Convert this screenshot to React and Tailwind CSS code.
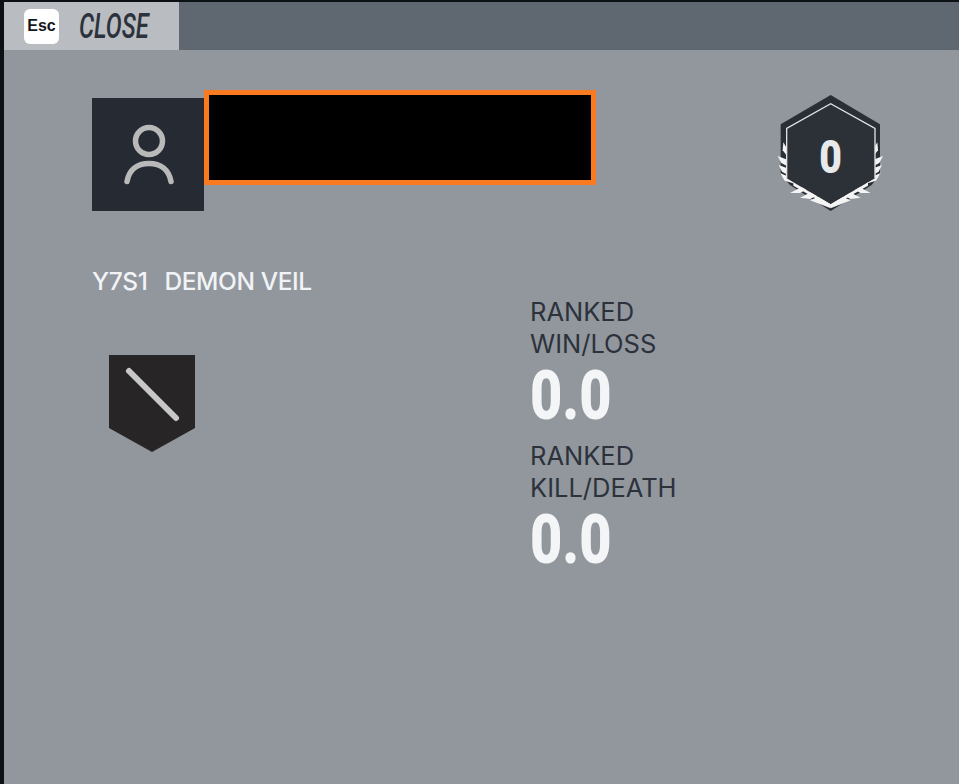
const Stat = ({ first, second, value }) => (
  <div className="flex flex-col">
    <div className="text-[25.5px] leading-[32px] text-[#2c323b]">{first}</div>
    <div className="text-[25.5px] leading-[32px] text-[#2c323b]">{second}</div>
    <div
      className="h-[80px] text-[68px] leading-[72px] font-black text-[#f4f5f7] origin-left scale-x-[0.82]"
      style={{ fontFamily: "Roboto, sans-serif" }}
    >
      {value}
    </div>
  </div>
);

// drawn on a 3x grid, shown at 140x135
const Badge = () => (
  <svg width="140" height="135" viewBox="0 0 420 405">
    <path d="M212 30 L360 118 L360 268 L335 300 L212 378 L90 300 L62 268 L62 118 Z" fill="#2a2f36" />
    <g fill="#f4f4f4">
      <path d="M70 172 L84 195 L82 214 L68 196 Z" />
      <path d="M53 213 L82 224 L82 244 L64 234 Z" />
      <path d="M56 240 L82 250 L84 270 L66 260 Z" />
      <path d="M60 264 L88 276 L104 296 L74 287 Z" />
      <path d="M90 324 L125 306 L146 310 L120 324 Z" />
      <path d="M120 338 L152 322 L176 330 L150 342 Z" />
      <path d="M150 346 L178 334 L212 354 L212 370 Z" />
      <path d="M352 172 L338 195 L340 214 L354 196 Z" />
      <path d="M369 213 L340 224 L340 244 L358 234 Z" />
      <path d="M366 240 L340 250 L338 270 L356 260 Z" />
      <path d="M362 264 L334 276 L318 296 L348 287 Z" />
      <path d="M332 324 L297 306 L276 310 L302 324 Z" />
      <path d="M302 338 L270 322 L246 330 L272 342 Z" />
      <path d="M272 346 L244 334 L212 354 L212 370 Z" />
    </g>
    <path d="M212 56 L345 130 L345 280 L212 358 L80 280 L80 130 Z" fill="#2c3138" />
    <path d="M100 292 L212 358 L324 292 L324 302 L212 366 L100 302 Z" fill="#f4f4f4" />
    <path d="M80 280 L80 130 L212 56 L345 130 L345 280" fill="none" stroke="#dfe1e3" strokeWidth="4" />
    <text
      x="212"
      y="264"
      textAnchor="middle"
      fontSize="140"
      fontWeight="900"
      fill="#e8e9eb"
      textLength="68"
      lengthAdjust="spacingAndGlyphs"
      style={{ fontFamily: "Roboto, sans-serif" }}
    >
      0
    </text>
  </svg>
);

export default function App() {
  return (
    <div
      className="w-[959px] h-[784px] overflow-hidden bg-[#0c1114] pl-1 pt-[2px] flex flex-col"
      style={{ fontFamily: "Inter, sans-serif" }}
    >
      <header className="h-[48px] bg-[#5f6871] flex shrink-0">
        <div className="w-[175px] bg-[#b9bcc1] flex items-center pl-[20px]">
          <div
            className="w-[35px] h-[35px] shrink-0 rounded-[6px] bg-white flex items-center justify-center text-[16px] font-bold text-[#15171a]"
            style={{ fontFamily: "'Liberation Sans', sans-serif" }}
          >
            Esc
          </div>
          <div
            className="ml-[20px] text-[35px] leading-none font-medium italic text-[#2c323b] origin-left scale-x-[0.68]"
            style={{ fontFamily: "Roboto, sans-serif" }}
          >
            CLOSE
          </div>
        </div>
      </header>

      <main className="flex-1 bg-[#91979d] pl-[88px] pr-[59px]">
        <div className="flex items-start">
          <div className="mt-[48px] w-[112px] h-[113px] bg-[#262b33] flex items-center justify-center">
            <svg width="112" height="113" viewBox="0 0 112 113" fill="none" stroke="#b9b9b9" strokeWidth="5.5" strokeLinecap="round">
              <circle cx="57" cy="43" r="13.5" />
              <path d="M35 83.5 C37 72 45 65.5 57 65.5 C69 65.5 77 72 79 83.5" />
            </svg>
          </div>
          <div className="mt-[40px] w-[392px] h-[95px] bg-black border-[5px] border-[#f97a20]" />
          <div className="mt-[35px] ml-auto">
            <Badge />
          </div>
        </div>

        <div className="flex">
          <div className="w-[438px] pt-[45px]">
            <div className="flex gap-[17px] text-[24.5px] leading-[32px] font-medium text-[#f1f3f6] tracking-[-0.4px]">
              <span>Y7S1</span>
              <span>DEMON VEIL</span>
            </div>
            <svg className="mt-[58px] ml-[17px]" width="86" height="97" viewBox="0 0 86 97">
              <path d="M0 0 H86 V73 L43 97 L0 73 Z" fill="#272526" />
              <path d="M20 16 L67 63" stroke="#c8c8c8" strokeWidth="6" strokeLinecap="round" />
            </svg>
          </div>
          <div className="pt-[76px] flex flex-col">
            <Stat first="RANKED" second="WIN/LOSS" value="0.0" />
            <Stat first="RANKED" second="KILL/DEATH" value="0.0" />
          </div>
        </div>
      </main>
    </div>
  );
}
